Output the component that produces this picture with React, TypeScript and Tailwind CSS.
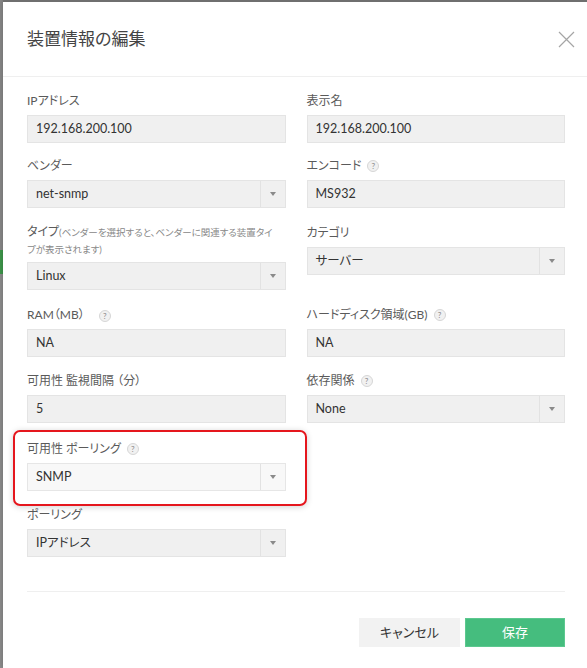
import React from "react";

const FONT = "font-['Lato','Noto_Sans_CJK_JP',sans-serif] [font-feature-settings:'palt']";

function Help() {
  return (
    <span className="ml-[6px] inline-flex h-[12px] w-[12px] items-center justify-center rounded-full border border-[#d6d6d6] bg-[#f1f1f1] text-[8px] leading-none text-[#888]">
      ?
    </span>
  );
}

function Label({ children }: { children: React.ReactNode }) {
  return (
    <div className="mb-[4px] flex h-[20px] items-center text-[12px] text-[#5a5a5a]">{children}</div>
  );
}

function Input({ value }: { value: string }) {
  return (
    <div className="flex h-[28px] items-center border border-[#e4e4e4] bg-[#f0f0f0] px-[8px] text-[12.5px] text-[#333]">
      {value}
    </div>
  );
}

function Select({ value, light }: { value: string; light?: boolean }) {
  return (
    <div
      className={`flex h-[28px] items-stretch border ${
        light ? "border-[#e6e6e6] bg-[#f8f8f8]" : "border-[#e4e4e4] bg-[#f0f0f0]"
      } text-[12.5px] text-[#333]`}
    >
      <div className="flex flex-1 items-center px-[8px]">{value}</div>
      <div className="flex w-[25px] items-center justify-center border-l border-[#e2e2e2]">
        <svg width="6" height="4" viewBox="0 0 6 4">
          <path d="M0 0h6L3 4z" fill="#8a8a8a" />
        </svg>
      </div>
    </div>
  );
}

export default function App() {
  return (
    <div className={`flex h-[668px] w-[587px] overflow-hidden bg-white ${FONT}`}>
      {/* page behind the dialog */}
      <div className="flex w-[3px] flex-none flex-col bg-[#8f8f8f]">
        <div className="h-[250px] bg-[#8a8a8a]" />
        <div className="h-[24px] bg-[#3f9a4c]" />
        <div className="flex-1 bg-[#8f8f8f]" />
      </div>

      <div className="flex flex-1 flex-col border-t-2 border-[#6f6f6f] shadow-[-2px_0_4px_rgba(0,0,0,0.15)]">
        {/* Header */}
        <div className="flex h-[75px] flex-none items-center justify-between border-b border-[#efefef] pl-[24px] pr-[12px]">
          <h1 className="text-[17px] text-[#444]">装置情報の編集</h1>
          <svg width="17" height="17" viewBox="0 0 17 17">
            <path d="M1 1L16 16M16 1L1 16" stroke="#a5a5a5" strokeWidth="1.2" />
          </svg>
        </div>

        {/* Body */}
        <div className="pl-[24px] pr-[22px] pt-[14px]">
          <div className="grid grid-cols-2 gap-x-[21px]">
            <div>
              <Label>IPアドレス</Label>
              <Input value="192.168.200.100" />
            </div>
            <div>
              <Label>表示名</Label>
              <Input value="192.168.200.100" />
            </div>
          </div>

          <div className="mt-[13px] grid grid-cols-2 gap-x-[21px]">
            <div>
              <Label>ベンダー</Label>
              <Select value="net-snmp" />
            </div>
            <div>
              <Label>
                エンコード
                <Help />
              </Label>
              <Input value="MS932" />
            </div>
          </div>

          <div className="mt-[13px] grid grid-cols-2 items-start gap-x-[21px]">
            <div>
              <div className="mb-[4px] h-[37px] overflow-hidden pt-[2px] text-[#5a5a5a]">
                <div className="text-[12px] leading-[18px]">
                  タイプ
                  <span className="text-[9.5px] leading-[18px] text-[#888]">
                    (ベンダーを選択すると、ベンダーに関連する装置タイ
                  </span>
                </div>
                <div className="text-[9.5px] leading-[16px] text-[#888]">プが表示されます)</div>
              </div>
              <Select value="Linux" />
            </div>
            <div className="mt-[2px]">
              <Label>カテゴリ</Label>
              <Select value="サーバー" />
            </div>
          </div>

          <div className="mt-[15px] grid grid-cols-2 gap-x-[21px]">
            <div>
              <Label>
                RAM（MB）
                <span className="ml-[8px]">
                  <Help />
                </span>
              </Label>
              <Input value="NA" />
            </div>
            <div>
              <Label>
                ハードディスク領域(GB)
                <Help />
              </Label>
              <Input value="NA" />
            </div>
          </div>

          <div className="mt-[14px] grid grid-cols-2 gap-x-[21px]">
            <div>
              <Label>可用性 監視間隔 （分）</Label>
              <Input value="5" />
            </div>
            <div>
              <Label>
                依存関係
                <Help />
              </Label>
              <Select value="None" />
            </div>
          </div>

          <div className="mt-[16px] grid grid-cols-2 gap-x-[21px]">
            <div className="relative">
              <Label>
                可用性 ポーリング
                <Help />
              </Label>
              <Select value="SNMP" light />
              {/* highlight annotation */}
              <div className="pointer-events-none absolute -bottom-[15px] -left-[14px] -right-[21px] -top-[9px] rounded-[7px] border-2 border-[#e5161d] shadow-[0_1px_6px_rgba(0,0,0,0.18)]" />
            </div>
            <div />
          </div>

          <div className="mt-[14px] grid grid-cols-2 gap-x-[21px]">
            <div>
              <Label>ポーリング</Label>
              <Select value="IPアドレス" />
            </div>
            <div />
          </div>

          {/* Footer */}
          <div className="mt-[34px] border-t border-[#efefef] pt-[26px]">
            <div className="flex justify-end gap-[5px]">
              <button className="h-[29px] w-[101px] bg-[#f2f2f2] text-[13px] text-[#333]">
                キャンセル
              </button>
              <button className="h-[29px] w-[100px] border border-[#5cc88f] bg-[#45bd7e] text-[13px] text-white">
                保存
              </button>
            </div>
          </div>
        </div>
      </div>
    </div>
  );
}
